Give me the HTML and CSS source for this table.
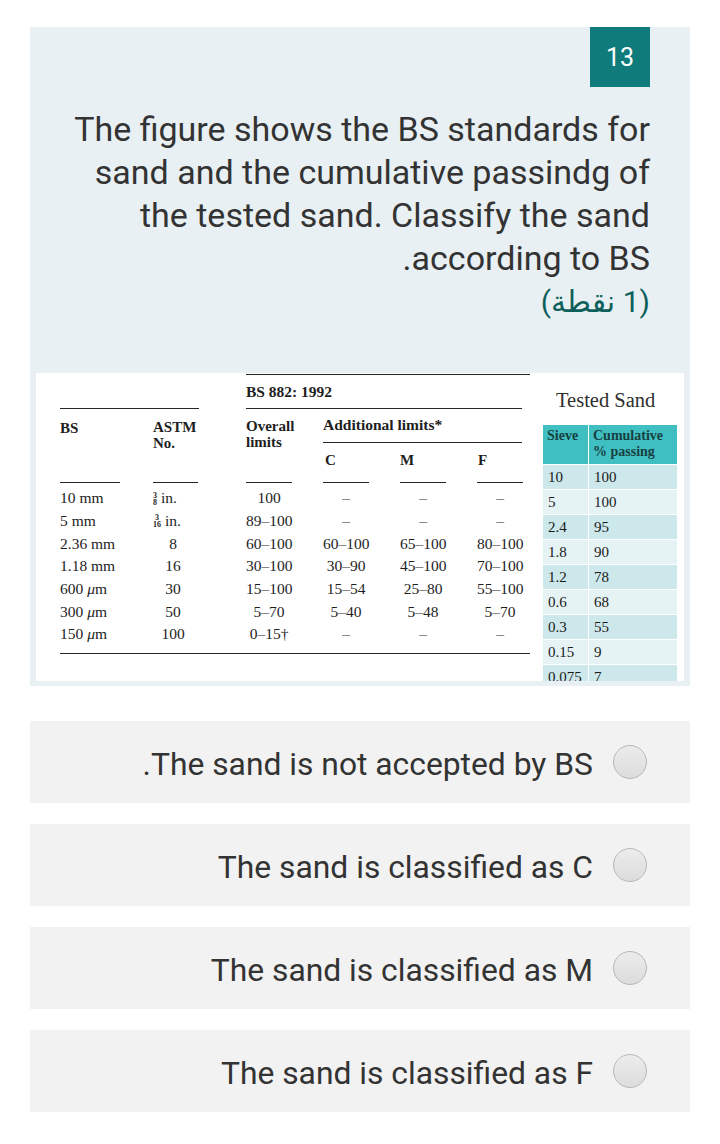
FILE: index.html
```html
<!DOCTYPE html>
<html lang="en">
<head>
<meta charset="utf-8">
<title>Question 13</title>
<link rel="stylesheet" href="styles.css">
</head>
<body>
<div class="card">
  <div class="card-head"><span class="badge">13</span></div>
  <p class="question" dir="rtl">The figure shows the BS standards for sand and the cumulative passindg of the tested sand. Classify the sand according to BS.</p>
  <p class="points" dir="rtl">(1 نقطة)</p>
  <div class="figure">
    <div class="std">
      <div class="std-head">
        <div class="ln l-top"></div>
        <div class="h-title">BS 882: 1992</div>
        <div class="ln l-mid-a"></div>
        <div class="ln l-mid-b"></div>
        <div class="h-bs">BS</div>
        <div class="h-astm">ASTM<br>No.</div>
        <div class="h-overall">Overall<br>limits</div>
        <div class="h-add">Additional limits*</div>
        <div class="ln l-add"></div>
        <div class="h-c">C</div>
        <div class="h-m">M</div>
        <div class="h-f">F</div>
        <div class="ln r r-bs"></div>
        <div class="ln r r-astm"></div>
        <div class="ln r r-col"></div>
        <div class="ln r r-col"></div>
        <div class="ln r r-col"></div>
        <div class="ln r r-col"></div>
      </div>
      <div class="std-body">
        <div class="bs">10 mm</div><div class="astm left"><span class="frac"><span>3</span><span>8</span></span> in.</div><div class="v">100</div><div class="v">–</div><div class="v">–</div><div class="v">–</div>
        <div class="bs">5 mm</div><div class="astm left"><span class="frac"><span>3</span><span>16</span></span> in.</div><div class="v">89–100</div><div class="v">–</div><div class="v">–</div><div class="v">–</div>
        <div class="bs">2.36 mm</div><div class="astm">8</div><div class="v">60–100</div><div class="v">60–100</div><div class="v">65–100</div><div class="v">80–100</div>
        <div class="bs">1.18 mm</div><div class="astm">16</div><div class="v">30–100</div><div class="v">30–90</div><div class="v">45–100</div><div class="v">70–100</div>
        <div class="bs">600 <i>μ</i>m</div><div class="astm">30</div><div class="v">15–100</div><div class="v">15–54</div><div class="v">25–80</div><div class="v">55–100</div>
        <div class="bs">300 <i>μ</i>m</div><div class="astm">50</div><div class="v">5–70</div><div class="v">5–40</div><div class="v">5–48</div><div class="v">5–70</div>
        <div class="bs">150 <i>μ</i>m</div><div class="astm">100</div><div class="v">0–15†</div><div class="v">–</div><div class="v">–</div><div class="v">–</div>
      </div>
      <div class="ln l-bottom"></div>
    </div>
    <div class="tested">
      <div class="t-title">Tested Sand</div>
      <div class="t-table">
        <div class="t-h">Sieve</div><div class="t-h">Cumulative<br>% passing</div>
        <div class="t-d dk">10</div><div class="t-d dk">100</div>
        <div class="t-d lt">5</div><div class="t-d lt">100</div>
        <div class="t-d dk">2.4</div><div class="t-d dk">95</div>
        <div class="t-d lt">1.8</div><div class="t-d lt">90</div>
        <div class="t-d dk">1.2</div><div class="t-d dk">78</div>
        <div class="t-d lt">0.6</div><div class="t-d lt">68</div>
        <div class="t-d dk">0.3</div><div class="t-d dk">55</div>
        <div class="t-d lt">0.15</div><div class="t-d lt">9</div>
        <div class="t-d dk">0.075</div><div class="t-d dk">7</div>
      </div>
    </div>
  </div>
</div>

<div class="options">
  <label class="option" dir="rtl"><span class="radio"></span><span class="opt-text">The sand is not accepted by BS.</span></label>
  <label class="option" dir="rtl"><span class="radio"></span><span class="opt-text">The sand is classified as C</span></label>
  <label class="option" dir="rtl"><span class="radio"></span><span class="opt-text">The sand is classified as M</span></label>
  <label class="option" dir="rtl"><span class="radio"></span><span class="opt-text">The sand is classified as F</span></label>
</div>
</body>
</html>
```

FILE: styles.css
```css
html, body {
  margin: 0;
  padding: 0;
  background: #ffffff;
}
body {
  font-family: Roboto, "DejaVu Sans", sans-serif;
  color: #333333;
  width: 720px;
  height: 1144px;
  overflow: hidden;
}

.card {
  margin: 27px 30px 0;
  background: #e8f0f3;
  padding-bottom: 5px;
}
.card-head {
  display: flex;
  justify-content: flex-end;
  padding-right: 40px;
}
.badge {
  width: 60px;
  height: 60px;
  background: #0f7c7b;
  color: #ffffff;
  font-size: 25px;
  display: flex;
  align-items: center;
  justify-content: center;
}
.question {
  margin: 21px 40px 0 32px;
  font-size: 34px;
  line-height: 43px;
  color: #333333;
}
.points {
  margin: 0 40px;
  font-size: 30px;
  line-height: 43px;
  color: #0d5f5b;
}

.figure {
  margin: 50px 6px 0;
  height: 308px;
  background: #ffffff;
  display: flex;
  overflow: hidden;
}

/* BS standard table */
.std {
  width: 504px;
  box-sizing: border-box;
  padding-left: 24px;
  padding-top: 1px;
  font-family: "Liberation Serif", "Times New Roman", serif;
  font-size: 15px;
  color: #1e1e1e;
}
.ln {
  background: #262626;
  height: 1px;
}
.std-head {
  display: grid;
  grid-template-columns: 93px 93px 77px 77px 77px 53px;
  grid-template-rows: 1px 33px 1px 33px 1px 39px 1px;
  font-weight: bold;
  line-height: 16px;
}
.l-top { grid-column: 3 / 7; grid-row: 1; }
.h-title { grid-column: 3 / 7; grid-row: 2; align-self: center; font-size: 15.5px; }
.l-mid-a { grid-column: 1 / 3; grid-row: 3; margin-right: 47px; }
.l-mid-b { grid-column: 3 / 7; grid-row: 3; margin-right: 8px; }
.h-bs { grid-column: 1; grid-row: 4 / 7; padding-top: 11px; }
.h-astm { grid-column: 2; grid-row: 4 / 7; padding-top: 10px; }
.h-overall { grid-column: 3; grid-row: 4 / 7; padding-top: 9px; }
.h-add { grid-column: 4 / 7; grid-row: 4; padding-top: 8px; font-size: 15.5px; }
.l-add { grid-column: 4 / 7; grid-row: 5; margin-right: 8px; }
.h-c { grid-column: 4; grid-row: 6; padding-top: 9px; padding-left: 2px; }
.h-m { grid-column: 5; grid-row: 6; padding-top: 9px; }
.h-f { grid-column: 6; grid-row: 6; padding-top: 9px; padding-left: 1px; }
.r { grid-row: 7; }
.r-bs { width: 60px; }
.r-astm { width: 45px; }
.r-col { width: 46px; }

.std-body {
  display: grid;
  grid-template-columns: 93px 93px 77px 77px 77px 53px;
  grid-auto-rows: 22.67px;
  align-items: center;
  padding-top: 4px;
  line-height: 18px;
  font-size: 15.5px;
}
.bs { white-space: nowrap; }
.astm { width: 40px; text-align: center; white-space: nowrap; }
.astm.left { text-align: left; }
.v { width: 46px; text-align: center; white-space: nowrap; }
.frac {
  display: inline-flex;
  flex-direction: column;
  align-items: center;
  vertical-align: middle;
  font-size: 8px;
  line-height: 7px;
  font-weight: bold;
  margin-top: -2px;
}
.l-bottom {
  margin-top: 7px;
  width: 470px;
}

/* Tested sand */
.tested {
  width: 144px;
  padding-left: 3px;
  box-sizing: border-box;
  font-family: "Liberation Serif", "Times New Roman", serif;
}
.t-title {
  margin-top: 15px;
  font-size: 20.5px;
  line-height: 25px;
  color: #2f2f2f;
  padding-left: 13px;
  white-space: nowrap;
}
.t-table {
  margin-top: 12px;
  width: 134px;
  display: grid;
  grid-template-columns: 45px 88px;
  grid-template-rows: 39px;
  grid-auto-rows: 24px;
  gap: 1px;
  background: #ffffff;
}
.t-h {
  background: #40bfc3;
  color: #173f41;
  font-weight: bold;
  font-size: 14px;
  line-height: 16px;
  padding: 3px 0 0 4px;
}
.t-d {
  font-size: 15px;
  line-height: 24px;
  padding-left: 5px;
  color: #1a1a1a;
}
.t-d.dk { background: #cde8eb; }
.t-d.lt { background: #e5f3f5; }

/* Options */
.options {
  margin: 35px 30px 0;
  display: flex;
  flex-direction: column;
  gap: 21px;
}
.option {
  height: 82px;
  background: #f2f2f2;
  display: flex;
  align-items: center;
  padding-right: 43px;
  gap: 20px;
  font-size: 31.8px;
  color: #333333;
}
.opt-text {
  padding-top: 3px;
}
.radio {
  width: 34px;
  height: 34px;
  border-radius: 50%;
  border: 1px solid #b8b8b8;
  background: linear-gradient(#ececec, #dcdcdc);
  box-sizing: border-box;
  flex: none;
}
```
